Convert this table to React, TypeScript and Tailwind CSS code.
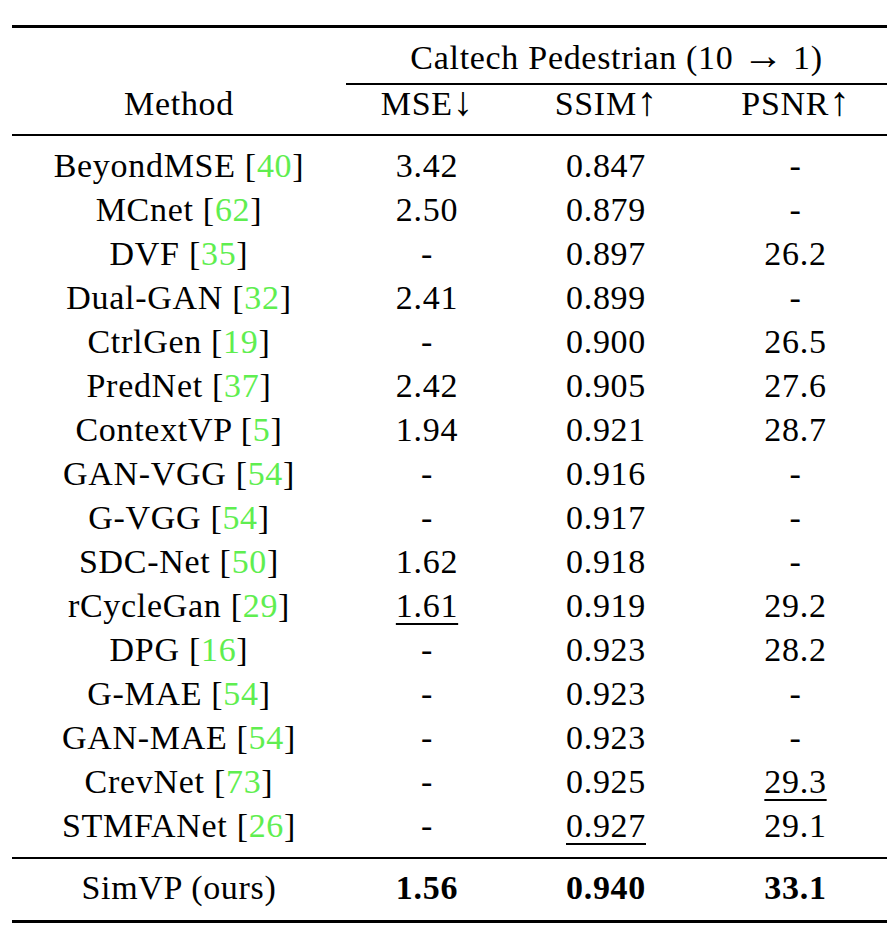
const cols = 'grid grid-cols-[334px_162px_196px_183px]';

// '_' prefix marks a second-best (underlined) value
const rows: [string, string, string, string, string][] = [
  ['BeyondMSE', '40', '3.42', '0.847', '-'],
  ['MCnet', '62', '2.50', '0.879', '-'],
  ['DVF', '35', '-', '0.897', '26.2'],
  ['Dual-GAN', '32', '2.41', '0.899', '-'],
  ['CtrlGen', '19', '-', '0.900', '26.5'],
  ['PredNet', '37', '2.42', '0.905', '27.6'],
  ['ContextVP', '5', '1.94', '0.921', '28.7'],
  ['GAN-VGG', '54', '-', '0.916', '-'],
  ['G-VGG', '54', '-', '0.917', '-'],
  ['SDC-Net', '50', '1.62', '0.918', '-'],
  ['rCycleGan', '29', '_1.61', '0.919', '29.2'],
  ['DPG', '16', '-', '0.923', '28.2'],
  ['G-MAE', '54', '-', '0.923', '-'],
  ['GAN-MAE', '54', '-', '0.923', '-'],
  ['CrevNet', '73', '-', '0.925', '_29.3'],
  ['STMFANet', '26', '-', '_0.927', '29.1'],
];

const Value = ({ v }: { v: string }) =>
  v.startsWith('_') ? (
    <span className="underline decoration-[1.5px] underline-offset-[6px]">{v.slice(1)}</span>
  ) : (
    <span>{v}</span>
  );

// TeX arrows are bigger than the serif font's own
const Arrow = ({ c }: { c: string }) => (
  <span className="text-[41px] leading-[0] tracking-normal">{c}</span>
);

export default function App() {
  return (
    <div className="min-h-screen bg-white pt-[25px] pl-[12px] [font-family:'Liberation_Serif','Times_New_Roman',serif] text-[34px] tracking-[0.7px] text-black">
      <div className="w-[875px] border-t-[3px] border-black">
        {/* header */}
        <div className={`${cols} border-b-2 border-black text-center`}>
          <div />
          <div className="col-span-3 border-b-2 border-black pt-[4px] leading-[51px]">
            Caltech Pedestrian (10 <Arrow c="→" /> 1)
          </div>
          <div className="pb-[11px] leading-[38px]">Method</div>
          <div className="pb-[11px] leading-[38px]">MSE<Arrow c="↓" /></div>
          <div className="pb-[11px] leading-[38px]">SSIM<Arrow c="↑" /></div>
          <div className="pb-[11px] leading-[38px]">PSNR<Arrow c="↑" /></div>
        </div>

        {/* body */}
        <div className="border-b-2 border-black pt-[8px] pb-[9px]">
          {rows.map(([name, ref, mse, ssim, psnr]) => (
            <div key={name} className={`${cols} h-[44px] text-center leading-[44px]`}>
              <div>
                {name} [<span className="text-[#5fee50]">{ref}</span>]
              </div>
              <div><Value v={mse} /></div>
              <div><Value v={ssim} /></div>
              <div><Value v={psnr} /></div>
            </div>
          ))}
        </div>

        {/* ours */}
        <div className={`${cols} border-b-[3px] border-black pt-[7px] pb-[10px] text-center leading-[44px]`}>
          <div>SimVP (ours)</div>
          <div className="font-bold">1.56</div>
          <div className="font-bold">0.940</div>
          <div className="font-bold">33.1</div>
        </div>
      </div>
    </div>
  );
}
